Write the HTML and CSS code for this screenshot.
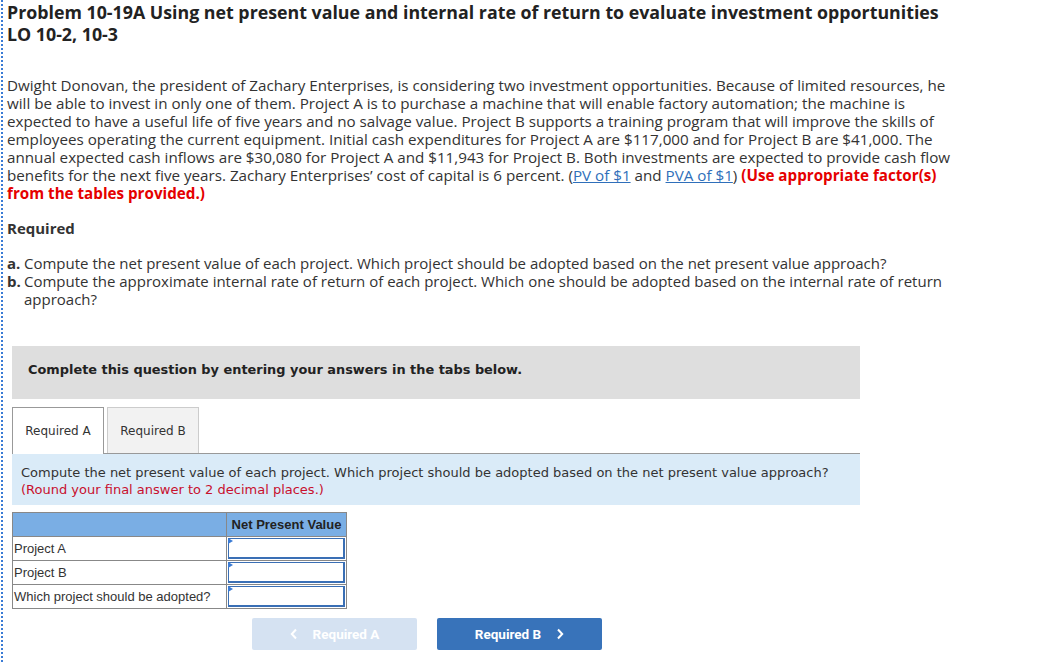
FILE: index.html
```html
<!DOCTYPE html>
<html>
<head>
<meta charset="utf-8">
<link rel="stylesheet" href="styles.css">
</head>
<body>
<div class="page">
  <h1 class="title">Problem 10-19A Using net present value and internal rate of return to evaluate investment opportunities<br>LO 10-2, 10-3</h1>
  <p class="intro">Dwight Donovan, the president of Zachary Enterprises, is considering two investment opportunities. Because of limited resources, he will be able to invest in only one of them. Project A is to purchase a machine that will enable factory automation; the machine is expected to have a useful life of five years and no salvage value. Project B supports a training program that will improve the skills of employees operating the current equipment. Initial cash expenditures for Project A are $117,000 and for Project B are $41,000. The annual expected cash inflows are $30,080 for Project A and $11,943 for Project B. Both investments are expected to provide cash flow benefits for the next five years. Zachary Enterprises’ cost of capital is 6 percent. (<a href="#" class="link">PV of $1</a> and <a href="#" class="link">PVA of $1</a>) <strong class="red">(Use appropriate factor(s) from the tables provided.)</strong></p>
  <h2 class="req">Required</h2>
  <ol class="parts">
    <li><b>a.</b><span>Compute the net present value of each project. Which project should be adopted based on the net present value approach?</span></li>
    <li><b>b.</b><span>Compute the approximate internal rate of return of each project. Which one should be adopted based on the internal rate of return approach?</span></li>
  </ol>
  <div class="panel">
    <div class="notice">Complete this question by entering your answers in the tabs below.</div>
    <div class="tabs">
      <div class="tab active">Required A</div>
      <div class="tab">Required B</div>
    </div>
    <div class="instr">Compute the net present value of each project. Which project should be adopted based on the net present value approach?<br><span class="round">(Round your final answer to 2 decimal places.)</span></div>
    <table class="grid">
      <tr class="head"><th class="c1"></th><th class="c2">Net Present Value</th></tr>
      <tr><td class="c1">Project A</td><td class="c2 inp"><div class="box"></div></td></tr>
      <tr><td class="c1">Project B</td><td class="c2 inp"><div class="box"></div></td></tr>
      <tr><td class="c1">Which project should be adopted?</td><td class="c2 inp"><div class="box"></div></td></tr>
    </table>
    <div class="nav">
      <button class="btn disabled"><svg class="chev" width="8" height="12" viewBox="0 0 8 12"><polyline points="6,1.5 1.8,6 6,10.5" fill="none" stroke="#fff" stroke-width="2"/></svg>Required A</button>
      <button class="btn primary">Required B<svg class="chev r" width="8" height="12" viewBox="0 0 8 12"><polyline points="2,1.5 6.2,6 2,10.5" fill="none" stroke="#fff" stroke-width="2"/></svg></button>
    </div>
  </div>
</div>
</body>
</html>
```
FILE: styles.css
```css
html, body { margin: 0; padding: 0; background: #fff; }
.page {
  border-left: 2px dotted #3a7bd5;
  margin-left: 1px;
  padding: 1px 0 12px 4px;
  min-height: 649px;
  font-family: "Open Sans", "Liberation Sans", sans-serif;
  color: #333;
}
.title {
  margin: 0;
  font-size: 17.8px;
  line-height: 22px;
  font-weight: 700;
  color: #222;
}
.intro {
  margin: 31px 0 0;
  width: 945px;
  font-size: 15.2px;
  line-height: 18px;
}
.link { color: #2f6fba; text-decoration: underline; }
.red { color: #e50000; font-weight: 700; }
.req {
  margin: 17px 0 0;
  font-size: 15px;
  line-height: 18px;
  font-weight: 700;
  color: #333;
}
.parts {
  list-style: none;
  margin: 17px 0 0;
  padding: 0;
  width: 955px;
  font-size: 15px;
  line-height: 18px;
}
.parts li { display: flex; }
.parts li b { width: 17px; flex: none; }
.panel { margin: 38px 0 0 5px; width: 848px; }
.notice {
  background: #dedede;
  height: 53px;
  box-sizing: border-box;
  padding: 0 16px 7px;
  display: flex;
  align-items: center;
  font-family: "DejaVu Sans", Verdana, sans-serif;
  font-weight: 700;
  font-size: 12.9px;
  color: #222;
}
.tabs {
  display: flex;
  gap: 3px;
  margin-top: 8px;
  border-bottom: 1px solid #999;
}
.tab {
  width: 92px;
  height: 46px;
  box-sizing: border-box;
  display: flex;
  align-items: center;
  justify-content: center;
  font-family: "DejaVu Sans", sans-serif;
  font-size: 12px;
  color: #333;
  background: #f2f2f2;
  border: 1px solid #ccc;
  border-bottom: none;
}
.tab.active {
  background: #fff;
  border: 1px solid #999;
  border-bottom: none;
  height: 47px;
  margin-bottom: -1px;
}
.instr {
  background: #daebf8;
  height: 51px;
  box-sizing: border-box;
  padding: 10px 9px 0;
  font-family: "DejaVu Sans", Verdana, sans-serif;
  font-size: 13px;
  line-height: 17px;
  color: #333;
}
.round { color: #c8102e; }
.grid {
  margin-top: 7px;
  border-collapse: collapse;
  font-family: "Liberation Sans", Arial, sans-serif;
  font-size: 13px;
  color: #333;
}
.grid th, .grid td {
  border: 1px solid #888;
  height: 23px;
  padding: 0;
}
.grid .head th { background: #7aaee4; }
.grid .c1 { width: 212px; text-align: left; padding-left: 1px; }
.grid .c2 { width: 119px; }
.grid th.c2 { font-weight: 700; text-align: center; color: #222; }
.grid td.inp { padding: 0; vertical-align: middle; }
.box {
  height: 21px;
  margin: 0 1px;
  border: 1px solid #3a6fb5;
  border-width: 1px 2px 2px 1px;
  box-sizing: border-box;
  position: relative;
}
.box::before {
  content: "";
  position: absolute;
  left: -1px;
  top: -1px;
  border-left: 5px solid #3a7bd5;
  border-top: 3px solid transparent;
  border-bottom: 3px solid transparent;
}
.nav { display: flex; gap: 20px; margin: 9px 0 0 240px; }
.btn {
  width: 165px;
  height: 32px;
  border: none;
  border-radius: 2px;
  font-family: Roboto, "Liberation Sans", sans-serif;
  font-weight: 700;
  font-size: 13.5px;
  color: #fff;
  display: flex;
  align-items: center;
  justify-content: center;
  padding: 0;
}
.btn.disabled { background: #d5e2f2; }
.btn.primary { background: #3873ba; }
.chev { margin-right: 15px; }
.chev.r { margin: 0 0 0 15px; }
```
